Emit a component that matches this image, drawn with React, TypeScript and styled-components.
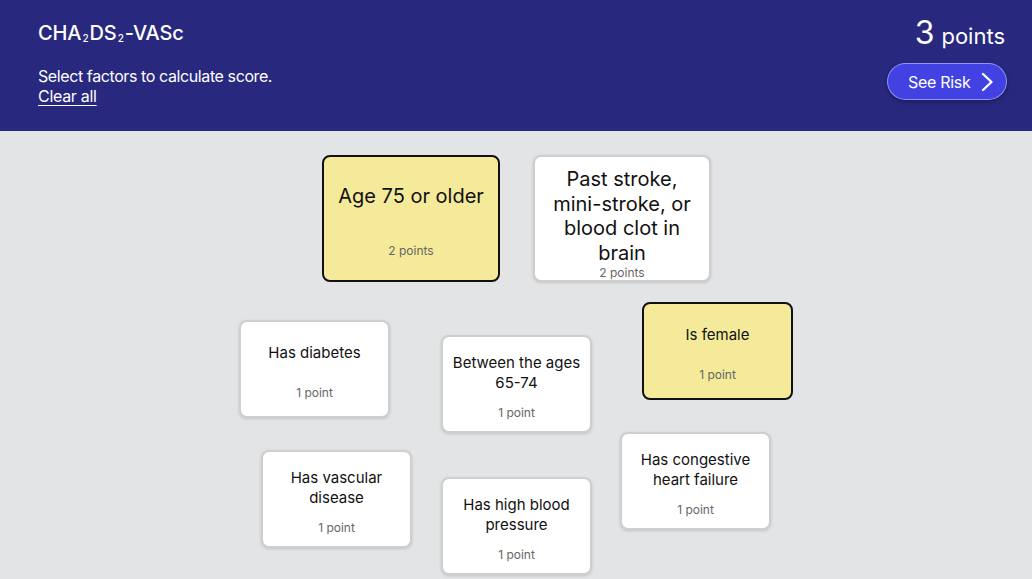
import styled, { createGlobalStyle } from 'styled-components';

const GlobalStyle = createGlobalStyle`
    html, body {
        margin: 0;
        padding: 0;
        background: #e3e4e6;
        font-family: Inter, "Noto Sans", sans-serif;
    }
    #root {
        min-height: 100vh;
    }
`;

type Factor = {
    label: string;
    points: number;
    selected?: boolean;
    large?: boolean;
    x: number;
    y: number;
};

const factors: Factor[] = [
    { label: 'Age 75 or older', points: 2, selected: true, large: true, x: 322, y: 24 },
    { label: 'Past stroke, mini-stroke, or blood clot in brain', points: 2, large: true, x: 533, y: 24 },
    { label: 'Has diabetes', points: 1, x: 239, y: 189 },
    { label: 'Between the ages 65-74', points: 1, x: 441, y: 204 },
    { label: 'Is female', points: 1, selected: true, x: 642, y: 171 },
    { label: 'Has vascular disease', points: 1, x: 261, y: 319 },
    { label: 'Has high blood pressure', points: 1, x: 441, y: 346 },
    { label: 'Has congestive heart failure', points: 1, x: 620, y: 301 },
];

const Page = styled.div`
    display: flex;
    flex-direction: column;
    height: 100vh;
`;

const Header = styled.header`
    height: 131px;
    flex-shrink: 0;
    background: #28287f;
    color: #fff;
    display: flex;
    justify-content: space-between;
    padding: 0 25px 0 38px;
    box-sizing: border-box;
`;

const HeaderLeft = styled.div`
    padding-top: 21px;
`;

const Title = styled.h1`
    margin: 0;
    font-size: 20px;
    font-weight: 500;
    line-height: 24px;
    letter-spacing: -0.1px;

    sub {
        font-size: 0.5em;
        vertical-align: -0.15em;
        line-height: 0;
        margin: 0 1px;
    }
`;

const Instructions = styled.p`
    margin: 21px 0 0;
    font-size: 16px;
    line-height: 20px;
    letter-spacing: -0.4px;
`;

const ClearLink = styled.a`
    display: block;
    color: #fff;
    font-size: 16px;
    line-height: 21px;
    letter-spacing: -0.3px;
    text-decoration: underline;
    text-underline-offset: 3px;
    cursor: pointer;
`;

const HeaderRight = styled.div`
    display: flex;
    flex-direction: column;
    align-items: flex-end;
    padding-top: 14px;
`;

const Score = styled.div`
    display: flex;
    align-items: baseline;
    gap: 7px;
    padding-right: 2px;
    line-height: 38px;
`;

const ScoreNumber = styled.span`
    font-size: 32px;
    font-weight: 400;
`;

const ScoreUnit = styled.span`
    font-size: 22px;
    font-weight: 400;
`;

const RiskButton = styled.button`
    margin-top: 8px;
    width: 120px;
    height: 37px;
    border-radius: 19px;
    border: 1.5px solid rgba(180, 180, 255, 0.7);
    background: #4242e2;
    color: #fff;
    font-family: inherit;
    font-size: 16px;
    letter-spacing: -0.3px;
    white-space: nowrap;
    display: flex;
    align-items: center;
    justify-content: flex-start;
    gap: 11px;
    padding: 0 0 0 20px;
    box-shadow: 0 2px 4px rgba(0, 0, 0, 0.3);
    cursor: pointer;

    svg {
        flex-shrink: 0;
    }
`;

const Canvas = styled.main`
    position: relative;
    flex: 1;
    background: #e3e4e6;
    overflow: hidden;
`;

const Card = styled.button<{ $selected?: boolean; $large?: boolean }>`
    position: absolute;
    box-sizing: border-box;
    width: ${(p) => (p.$large ? 178 : 151)}px;
    height: ${(p) => (p.$large ? 127 : 98)}px;
    padding: 10px 8px 5px;
    border-radius: 8px;
    border: 2px solid ${(p) => (p.$selected ? '#111' : '#cfcfcf')};
    background: ${(p) => (p.$selected ? '#f4ea9a' : '#fff')};
    box-shadow: ${(p) => (p.$selected ? 'none' : '0 1px 3px rgba(0,0,0,0.15)')};
    display: flex;
    flex-direction: column;
    align-items: center;
    justify-content: space-around;
    font-family: inherit;
    text-align: center;
    cursor: pointer;
`;

const CardLabel = styled.div<{ $large?: boolean }>`
    color: #111;
    font-size: ${(p) => (p.$large ? 20 : 15)}px;
    line-height: ${(p) => (p.$large ? 24.6 : 20)}px;
    font-weight: 400;
`;

const CardPoints = styled.div`
    color: #666;
    font-size: 12px;
    line-height: 15px;
`;

function Chevron() {
    return (
        <svg width="13" height="20" viewBox="0 0 13 20" fill="none">
            <path d="M2 2 L10.5 10 L2 18" stroke="#fff" strokeWidth="2.4" strokeLinecap="round" strokeLinejoin="round" />
        </svg>
    );
}

export default function App() {
    return (
        <Page>
            <GlobalStyle />
            <Header>
                <HeaderLeft>
                    <Title>
                        CHA<sub>2</sub>DS<sub>2</sub>-VASc
                    </Title>
                    <Instructions>Select factors to calculate score.</Instructions>
                    <ClearLink>Clear all</ClearLink>
                </HeaderLeft>
                <HeaderRight>
                    <Score>
                        <ScoreNumber>3</ScoreNumber>
                        <ScoreUnit>points</ScoreUnit>
                    </Score>
                    <RiskButton>
                        See Risk
                        <Chevron />
                    </RiskButton>
                </HeaderRight>
            </Header>
            <Canvas>
                {factors.map((f) => (
                    <Card
                        key={f.label}
                        $selected={f.selected}
                        $large={f.large}
                        style={{ left: f.x, top: f.y }}
                    >
                        <CardLabel $large={f.large}>{f.label}</CardLabel>
                        <CardPoints>
                            {f.points} {f.points === 1 ? 'point' : 'points'}
                        </CardPoints>
                    </Card>
                ))}
            </Canvas>
        </Page>
    );
}
